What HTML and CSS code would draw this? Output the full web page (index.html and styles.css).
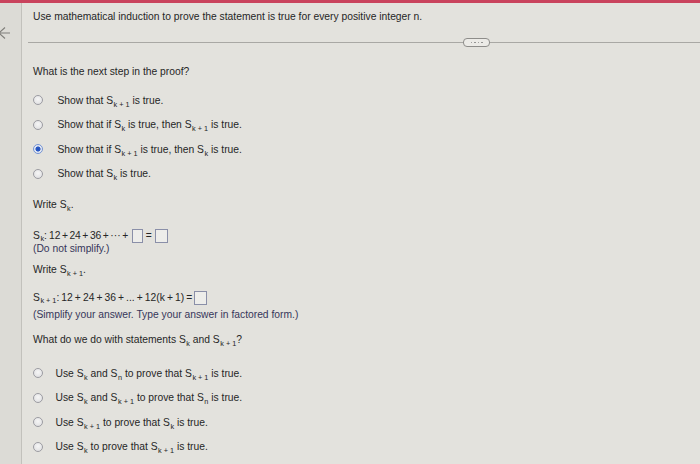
FILE: index.html
```html
<!DOCTYPE html>
<html>
<head>
<meta charset="utf-8">
<link rel="stylesheet" href="styles.css">
</head>
<body>
<div class="redbar"></div>
<div class="app">
  <div class="side">
    <svg class="back" width="14" height="14" viewBox="0 0 14 14"><path d="M-1 7 H10 M-1 7 L5 1.5 M-1 7 L5 12.5" fill="none" stroke="#7f7e7a" stroke-width="1.1"/></svg>
  </div>
  <div class="main">
    <div class="title row">Use mathematical induction to prove the statement is true for every positive integer n.</div>
    <div class="divider">
      <div class="seg left"></div>
      <div class="pill"><span></span><span></span><span></span><span></span></div>
      <div class="seg right"></div>
    </div>
    <div class="q1 row">What is the next step in the proof?</div>
    <div class="list list1">
      <div class="opt"><span class="radio"></span><span>Show that S<sub>k + 1</sub> is true.</span></div>
      <div class="opt"><span class="radio"></span><span>Show that if S<sub>k</sub> is true, then S<sub>k + 1</sub> is true.</span></div>
      <div class="opt"><span class="radio on"></span><span>Show that if S<sub>k + 1</sub> is true, then S<sub>k</sub> is true.</span></div>
      <div class="opt"><span class="radio"></span><span>Show that S<sub>k</sub> is true.</span></div>
    </div>
    <div class="wsk row">Write S<sub>k</sub>.</div>
    <div class="eq1 row">S<sub>k</sub>:<span class="sp"></span>12<span class="op">+</span>24<span class="op">+</span>36<span class="op">+</span>···<span class="op">+</span><span class="box"></span><span class="eqs">=</span><span class="box wide"></span></div>
    <div class="note row small">(Do not simplify.)</div>
    <div class="wsk1 row">Write S<sub>k + 1</sub>.</div>
    <div class="eq2 row">S<sub>k + 1</sub>:&thinsp;12&thinsp;+&thinsp;24&thinsp;+&thinsp;36&thinsp;+&thinsp;...&thinsp;+&thinsp;12(k&thinsp;+&thinsp;1)&thinsp;=<span class="box wide"></span></div>
    <div class="note2 row small">(Simplify your answer. Type your answer in factored form.)</div>
    <div class="q2 row">What do we do with statements S<sub>k</sub> and S<sub>k + 1</sub>?</div>
    <div class="list list2">
      <div class="opt"><span class="radio"></span><span>Use S<sub>k</sub> and S<sub>n</sub> to prove that S<sub>k + 1</sub> is true.</span></div>
      <div class="opt"><span class="radio"></span><span>Use S<sub>k</sub> and S<sub>k + 1</sub> to prove that S<sub>n</sub> is true.</span></div>
      <div class="opt"><span class="radio"></span><span>Use S<sub>k + 1</sub> to prove that S<sub>k</sub> is true.</span></div>
      <div class="opt"><span class="radio"></span><span>Use S<sub>k</sub> to prove that S<sub>k + 1</sub> is true.</span></div>
    </div>
  </div>
</div>
</body>
</html>
```
FILE: styles.css
```css
html, body {
  margin: 0;
  padding: 0;
  width: 700px;
  height: 464px;
  overflow: hidden;
  background: #e3e2dd;
  font-family: "Liberation Sans", Arial, sans-serif;
  font-size: 10.3px;
  color: #262626;
}
.redbar {
  height: 3px;
  background: #c9435d;
}
.app {
  display: flex;
  height: 461px;
}
.side {
  width: 21px;
  flex: none;
  background: #dcdbd6;
  border-right: 1px solid #c2c1bc;
  position: relative;
}
.back {
  position: absolute;
  left: 0;
  top: 23px;
}
.main {
  flex: 1;
  display: flex;
  flex-direction: column;
  padding-left: 11px;
}
.row {
  height: 14px;
  line-height: 14px;
  white-space: nowrap;
}
.small {
  height: 12px;
  line-height: 12px;
}
sub {
  font-size: 7.3px;
  vertical-align: baseline;
  position: relative;
  top: 3px;
  line-height: 0;
  margin-left: 0.5px;
}
.title { margin-top: 7px; }
.divider {
  margin-top: 14px;
  height: 9px;
  display: flex;
  align-items: center;
  margin-left: -5px;
}
.seg {
  height: 1px;
  background: #a9a8a4;
}
.seg.left { width: 435px; }
.seg.right { flex: 1; }
.pill {
  width: 25px;
  height: 7px;
  border: 1px solid #8e8d8a;
  border-radius: 4px;
  background: #ecebe7;
  display: flex;
  align-items: center;
  justify-content: center;
  gap: 2px;
}
.pill span {
  width: 1.5px;
  height: 1.5px;
  background: #888;
  border-radius: 50%;
}
.q1 { margin-top: 18px; }
.list { display: flex; flex-direction: column; }
.list1 { margin-top: 8.7px; }
.list2 { margin-top: 13.7px; }
.opt {
  height: 24.67px;
  display: flex;
  align-items: center;
  white-space: nowrap;
}
.radio {
  width: 8px;
  height: 8px;
  border: 1.3px solid #9c9ca2;
  border-radius: 50%;
  background: radial-gradient(circle at 50% 40%, #f6f6f6 0%, #dcdcde 100%);
  box-sizing: content-box;
  flex: none;
}
.list1 .radio { margin-left: 0px; margin-right: 14.5px; }
.list2 .radio { margin-left: 0px; margin-right: 12.5px; }
.radio.on {
  border-color: #7594d4;
  background: radial-gradient(circle, #1f4fb8 0%, #2b5bc8 40%, #dfe4f0 50%, #eef0f5 100%);
}
.wsk { margin-top: 11.7px; }
.eq1 { margin-top: 17px; display: flex; align-items: center; }
.sp { display: inline-block; width: 2px; }
.op { margin: 0 1.5px; }
.box {
  display: inline-block;
  width: 9px;
  height: 12px;
  border: 1px solid #8a8fa8;
  background: #ededea;
  margin: 0 2px;
  vertical-align: middle;
}
.box.wide { width: 11px; }
.eqs { margin: 0 1px; }
.note, .note2 { color: #36365a; }
.wsk1 { margin-top: 8px; }
.eq2 { margin-top: 14px; display: flex; align-items: center; }
.note2 { margin-top: 4px; }
.q2 { margin-top: 12px; }
```
